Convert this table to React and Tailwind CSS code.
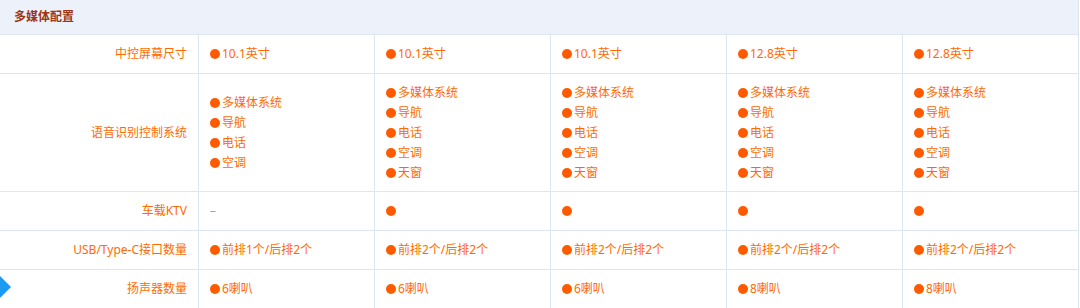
import React from "react";

const cols = [
  { screen: "10.1英寸", voice: ["多媒体系统", "导航", "电话", "空调"], ktv: false, usb: "前排1个/后排2个", spk: "6喇叭" },
  { screen: "10.1英寸", voice: ["多媒体系统", "导航", "电话", "空调", "天窗"], ktv: true, usb: "前排2个/后排2个", spk: "6喇叭" },
  { screen: "10.1英寸", voice: ["多媒体系统", "导航", "电话", "空调", "天窗"], ktv: true, usb: "前排2个/后排2个", spk: "6喇叭" },
  { screen: "12.8英寸", voice: ["多媒体系统", "导航", "电话", "空调", "天窗"], ktv: true, usb: "前排2个/后排2个", spk: "8喇叭" },
  { screen: "12.8英寸", voice: ["多媒体系统", "导航", "电话", "空调", "天窗"], ktv: true, usb: "前排2个/后排2个", spk: "8喇叭" },
];

function Dot() {
  return <span className="inline-block w-[10px] h-[10px] rounded-full bg-[#ff5a00] mr-[2px] shrink-0" />;
}

function Item({ text }) {
  return (
    <div className="flex items-center h-[20px]">
      <Dot />
      {text && <span>{text}</span>}
    </div>
  );
}

function Label({ children, h }) {
  return (
    <div className={`${h} flex items-center justify-end pr-[11px] border-r border-b border-[#dde7f4]`}>
      {children}
    </div>
  );
}

function Cell({ children, h }) {
  return (
    <div className={`${h} flex flex-col justify-center pl-[11px] border-r border-b border-[#dde7f4]`}>
      {children}
    </div>
  );
}

export default function App() {
  const rows = [
    { label: "中控屏幕尺寸", h: "h-[39px]", render: (c) => <Item text={c.screen} /> },
    {
      label: "语音识别控制系统",
      h: "h-[118px]",
      render: (c) => c.voice.map((v) => <Item key={v} text={v} />),
    },
    {
      label: "车载KTV",
      h: "h-[39px]",
      render: (c) => (c.ktv ? <Item /> : <span className="text-[#ff8a3d]">–</span>),
    },
    { label: "USB/Type-C接口数量", h: "h-[39px]", render: (c) => <Item text={c.usb} /> },
    { label: "扬声器数量", h: "h-[39px]", render: (c) => <Item text={c.spk} /> },
  ];

  return (
    <div
      className="relative w-[1080px] h-[308px] bg-white overflow-hidden text-[12px] text-[#ff6a00]"
      style={{ fontFamily: '"Noto Sans", "Noto Sans CJK SC", sans-serif' }}
    >
      <div className="w-[1079px] border-r border-[#dde7f4]">
        <div className="h-[35px] bg-[#edf1f9] border-b border-[#dde7f4] flex items-center pl-[14px] font-bold text-[#9e3512]">
          多媒体配置
        </div>
        <div className="grid grid-cols-[199px_repeat(5,176px)]">
          {rows.map((r) => (
            <React.Fragment key={r.label}>
              <Label h={r.h}>{r.label}</Label>
              {cols.map((c, i) => (
                <Cell key={i} h={r.h}>
                  {r.render(c)}
                </Cell>
              ))}
            </React.Fragment>
          ))}
        </div>
      </div>
      <svg className="absolute left-0 top-[276px]" width="12" height="22" viewBox="0 0 12 22">
        <polygon points="0,0 11,11 0,22" fill="#1a9af0" />
      </svg>
    </div>
  );
}
